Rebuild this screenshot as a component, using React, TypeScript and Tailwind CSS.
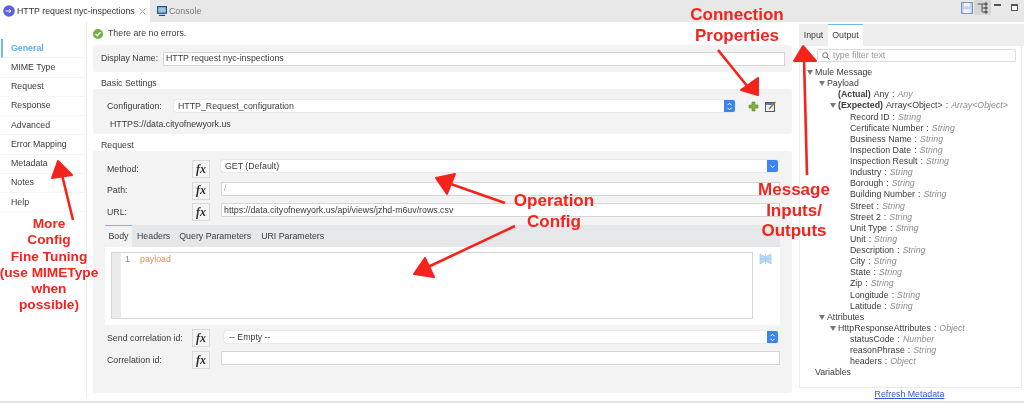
import type { ReactNode } from "react";

const navItems = ["General", "MIME Type", "Request", "Response", "Advanced", "Error Mapping", "Metadata", "Notes", "Help"];

type TreeRow = { depth: number; open?: boolean; name: string; bold?: string; type?: string };

const str = (name: string): TreeRow => ({ depth: 3, name, type: "String" });

const treeRows: TreeRow[] = [
  { depth: 0, open: true, name: "Mule Message" },
  { depth: 1, open: true, name: "Payload" },
  { depth: 2, bold: "(Actual)", name: "Any", type: "Any" },
  { depth: 2, open: true, bold: "(Expected)", name: "Array<Object>", type: "Array<Object>" },
  ...["Record ID", "Certificate Number", "Business Name", "Inspection Date", "Inspection Result", "Industry", "Borough", "Building Number", "Street", "Street 2", "Unit Type", "Unit", "Description", "City", "State", "Zip", "Longitude", "Latitude"].map(str),
  { depth: 1, open: true, name: "Attributes" },
  { depth: 2, open: true, name: "HttpResponseAttributes", type: "Object" },
  { depth: 3, name: "statusCode", type: "Number" },
  str("reasonPhrase"),
  { depth: 3, name: "headers", type: "Object" },
  { depth: 0, name: "Variables" },
];

const depthPad = ["pl-[15px]", "pl-[27px]", "pl-[38px]", "pl-[50px]"];

function Fx() {
  return (
    <div className="w-[18px] h-[18px] shrink-0 flex items-center justify-center bg-[#f5f5f5] border border-[#d9d9d9] text-[12px] italic font-bold text-[#333] font-['Liberation_Serif',serif]">
      fx
    </div>
  );
}

function Row({ label, children, className = "" }: { label: string; children: ReactNode; className?: string }) {
  return (
    <div className={`flex items-center h-[18px] ${className}`}>
      <span className="w-[99px] pl-[14px] shrink-0 whitespace-nowrap">{label}</span>
      <Fx />
      {children}
    </div>
  );
}

function Input({ value, className = "" }: { value: string; className?: string }) {
  return (
    <div className={`h-[14px] bg-white border border-[#d6d6d6] flex items-center px-[2px] ${className}`}>
      {value}
    </div>
  );
}

function SelectBox({ value, single, className = "" }: { value: string; single?: boolean; className?: string }) {
  return (
    <div className={`h-[12px] bg-white rounded-[2px] shadow-[0_0_1px_#999] flex items-center justify-between pl-[4px] ${className}`}>
      <span>{value}</span>
      <span className="w-[11px] h-[12px] rounded-r-[2px] bg-[#3b86ee] flex items-center justify-center">
        <svg width="7" height="9" viewBox="0 0 7 9" fill="none" stroke="white" strokeWidth="1">
          {single ? <path d="M1.5 3.5 3.5 5.5 5.5 3.5" /> : <path d="M1.5 3.2 3.5 1.2 5.5 3.2M1.5 5.8 3.5 7.8 5.5 5.8" />}
        </svg>
      </span>
    </div>
  );
}

function Arrows() {
  return (
    <svg className="absolute inset-0 pointer-events-none" width="1024" height="403" fill="#f5231c" stroke="#f5231c" strokeLinejoin="round">
      <path d="M62 175 73 220" strokeWidth="2.6" fill="none" />
      <path d="M58 161 52 178 72 175Z" strokeWidth="2" />
      <path d="M718 50 748 87" strokeWidth="2.6" fill="none" />
      <path d="M758 78 741 90 758 95Z" strokeWidth="2" />
      <path d="M804 58 807 175" strokeWidth="2.6" fill="none" />
      <path d="M803 46 794 61 816 61Z" strokeWidth="2" />
      <path d="M505 203 448 183" strokeWidth="2.6" fill="none" />
      <path d="M455 174 436 178 447 194Z" strokeWidth="2" />
      <path d="M515 226 428 267" strokeWidth="2.6" fill="none" />
      <path d="M425 258 414 274 434 277Z" strokeWidth="2" />
    </svg>
  );
}

function Note({ lines, className }: { lines: string[]; className: string }) {
  return (
    <div className={`absolute text-center font-bold text-[#f5231c] ${className}`}>
      {lines.map((l) => (
        <div key={l}>{l}</div>
      ))}
    </div>
  );
}

export default function App() {
  return (
    <div className="relative w-[1024px] h-[403px] overflow-hidden bg-white text-[#3a3a3a] text-[8.8px] leading-[11px] font-['Liberation_Sans',Arial,sans-serif] blur-[0.3px]">
      {/* top tab strip */}
      <div className="h-[22px] bg-[#e8e8e9] flex items-center">
        <div className="w-[150px] h-[22px] bg-white flex items-center pl-[3px] whitespace-nowrap">
          <svg width="12" height="12" viewBox="0 0 12 12" className="shrink-0">
            <circle cx="6" cy="6" r="5.8" fill="#5b62e0" />
            <path d="M2.5 6H8M6 4 8 6 6 8" stroke="white" strokeWidth="1" fill="none" />
          </svg>
          <span className="ml-[2px] text-[#333]">HTTP request nyc-inspections</span>
          <svg width="7" height="7" viewBox="0 0 7 7" className="ml-[4px]" stroke="#aaa" strokeWidth="1">
            <path d="M0.5 0.5 6.5 6.5M6.5 0.5 0.5 6.5" />
          </svg>
        </div>
        <svg width="10" height="10" viewBox="0 0 10 10" className="ml-[7px]">
          <rect x="0.6" y="0.6" width="8.8" height="6.6" fill="#9cc4e8" stroke="#1f4f85" strokeWidth="1.2" />
          <path d="M2 9.4H8" stroke="#1f4f85" strokeWidth="1.2" />
        </svg>
        <span className="ml-[2px] text-[#777]">Console</span>
        <div className="ml-auto self-start flex items-start pr-[6px]">
          <svg width="12" height="12" viewBox="0 0 12 12" className="mt-[2px]">
            <rect x="0.5" y="0.5" width="11" height="11" fill="#bcd0ea" stroke="#7d97bc" />
            <rect x="3" y="1" width="6" height="3.5" fill="#eef3fa" />
            <rect x="2.5" y="7" width="7" height="4" fill="#eef3fa" />
          </svg>
          <div className="ml-[1px] w-[17px] h-[15px] bg-[#d6d6d6] flex items-center justify-center">
            <svg width="11" height="12" viewBox="0 0 11 12" fill="none" stroke="#555" strokeWidth="1">
              <path d="M0.5 2H10M5 2V10H9M5 6H9" />
              <path d="M8 1H10V3H8ZM8 5H10V7H8ZM8 9H10V11H8Z" fill="#4d8a5f" />
            </svg>
          </div>
          <div className="ml-[3px] mt-[4px] w-[7px] h-[2px] border border-[#555] bg-white" />
          <div className="ml-[10px] mt-[4px] w-[7px] h-[7px] border border-[#555] border-t-2 bg-white" />
        </div>
      </div>

      <div className="flex h-[379px]">
        {/* section nav */}
        <div className="w-[87px] shrink-0 h-[377px] border-r border-[#ececec] pt-[17px] pl-[1px]">
          {navItems.map((item, i) => (
            <div key={item} className={i === 0 ? "h-[19.25px] flex items-center pl-[8px] border-l-2 border-l-[#6fbbe8] border-b border-[#f4f4f4] text-[#5bb0e3] font-bold" : "h-[19.25px] flex items-center pl-[10px] border-b border-[#f4f4f4]"}>
              {item}
            </div>
          ))}
        </div>

        {/* editor */}
        <div className="w-[705px] shrink-0 pl-[6px]">
          <div className="h-[23px] flex items-center">
            <span className="w-[10px] h-[10px] rounded-full bg-[#6db33f] flex items-center justify-center">
              <svg width="8" height="8" viewBox="0 0 8 8" fill="none" stroke="white" strokeWidth="1.4">
                <path d="M1.5 4 3.3 5.8 6.5 2.2" />
              </svg>
            </span>
            <span className="ml-[5px]">There are no errors.</span>
          </div>

          <div className="h-[27px] bg-[#f3f3f3] rounded-[3px] flex items-center pl-[8px] pr-[7px]">
            <span className="w-[62px]">Display Name:</span>
            <Input value="HTTP request nyc-inspections" className="flex-1" />
          </div>

          <div className="h-[17px] flex items-end pl-[8px]">Basic Settings</div>
          <div className="h-[45px] bg-[#f3f3f3] rounded-[3px] pl-[14px] pt-[11px]">
            <div className="flex items-center">
              <span className="w-[67px]">Configuration:</span>
              <SelectBox value="HTTP_Request_configuration" className="w-[561px]" />
              <svg width="11" height="11" viewBox="0 0 11 11" className="ml-[13px]">
                <path d="M4 1H7V4H10V7H7V10H4V7H1V4H4Z" fill="#7cb342" stroke="#5d8f2c" strokeWidth="0.6" />
              </svg>
              <svg width="12" height="11" viewBox="0 0 12 11" className="ml-[6px]" fill="none">
                <rect x="0.5" y="1.5" width="9" height="9" fill="#eef3f6" stroke="#556" />
                <rect x="1" y="2" width="8" height="2" fill="#4f7fc0" />
                <path d="M4 8 10.5 1" stroke="#a8742f" strokeWidth="1.4" />
              </svg>
            </div>
            <div className="pl-[3px] mt-[7px]">HTTPS://data.cityofnewyork.us</div>
          </div>

          <div className="h-[11px] mt-[6px] flex items-center pl-[8px]">Request</div>
          <div className="h-[242px] bg-[#f3f3f3] rounded-[3px] pt-[9px]">
            <Row label="Method:">
              <SelectBox value="GET (Default)" single className="ml-[11px] w-[557px] mb-[6px]" />
            </Row>
            <Row label="Path:" className="mt-[3.5px]">
              <Input value="/" className="ml-[11px] w-[559px] mb-[4px] text-[#aaa]" />
            </Row>
            <Row label="URL:" className="mt-[3.5px]">
              <Input value="https://data.cityofnewyork.us/api/views/jzhd-m6uv/rows.csv" className="ml-[11px] w-[559px] mb-[4px]" />
            </Row>

            <div className="ml-[12px] w-[675px] mt-[4px]">
              <div className="h-[22px] bg-[#e6e7e8] flex items-stretch">
                <div className="w-[27px] bg-[#f3f3f3] border-t border-[#6fbbe8] flex items-center justify-center">Body</div>
                <span className="ml-[5px] self-center">Headers</span>
                <span className="ml-[9px] self-center">Query Parameters</span>
                <span className="ml-[10px] self-center">URI Parameters</span>
              </div>
              <div className="h-[78px] bg-white pt-[5px] pl-[6px] flex items-start">
                <div className="w-[642px] h-[67px] border border-[#d6d6d6] flex">
                  <div className="w-[9px] bg-[#ececec] shrink-0" />
                  <span className="w-[9px] text-right text-[#888] pt-[1px]">1</span>
                  <span className="ml-[10px] pt-[1px] text-[#d9953c]">payload</span>
                </div>
                <svg width="13" height="12" viewBox="0 0 13 12" className="ml-[6px] mt-[1px]" fill="#bcdcf5" stroke="#8fc4ee" strokeWidth="0.6">
                  <path d="M1 1 6.5 4 12 1V11L6.5 8 1 11Z" />
                  <path d="M1 6H12M6.5 1V11" fill="none" />
                </svg>
              </div>
            </div>

            <Row label="Send correlation id:" className="mt-[4px]">
              <SelectBox value="-- Empty --" className="ml-[14px] w-[554px] pl-[5px] mb-[2px]" />
            </Row>
            <Row label="Correlation id:" className="mt-[4px]">
              <Input value="" className="ml-[11px] w-[559px] mb-[4px]" />
            </Row>
          </div>
        </div>

        {/* metadata */}
        <div className="w-[225px] ml-[7px] shrink-0 mt-[2px]">
          <div className="h-[22px] bg-[#eeeeef] flex items-stretch">
            <div className="w-[29px] flex items-center justify-center">Input</div>
            <div className="w-[35px] bg-white border-t border-[#6fbbe8] flex items-center justify-center">Output</div>
          </div>
          <div className="h-[342px] mr-[2px] pt-[3px] border border-t-0 border-[#ececec]">
            <div className="h-[13px] ml-[17px] mr-[5px] border border-[#ddd] rounded-[2px] flex items-center pl-[4px] text-[#999]">
              <svg width="8" height="8" viewBox="0 0 8 8" fill="none" stroke="#777" strokeWidth="1">
                <circle cx="3.2" cy="3.2" r="2.5" />
                <path d="M5 5 7.5 7.5" />
              </svg>
              <span className="ml-[3px]">type filter text</span>
            </div>
            <div className="mt-[5px]">
              {treeRows.map((row) => (
                <div key={row.name} className={`h-[11.125px] flex items-center whitespace-nowrap ${depthPad[row.depth]}`}>
                  {row.open && <span className="w-0 h-0 -ml-[8px] mr-[2px] border-x-[3px] border-x-transparent border-t-[5px] border-t-[#777]" />}
                  {row.bold && <span className="font-bold mr-[3px]">{row.bold}</span>}
                  <span>{row.name}</span>
                  {row.type && <span className="ml-[3px]">:</span>}
                  {row.type && <span className="ml-[3px] italic text-[#8d8d8d]">{row.type}</span>}
                </div>
              ))}
            </div>
          </div>
          <div className="h-[12px] flex items-center justify-center pr-[4px] text-[#3a55d0] underline">Refresh Metadata</div>
        </div>
      </div>
      <div className="h-[2px] bg-[#e6e6e6]" />

      <Arrows />
      <Note lines={["Connection", "Properties"]} className="left-[677px] w-[120px] top-[5px] text-[17px] leading-[20.5px]" />
      <Note lines={["Operation", "Config"]} className="left-[494px] w-[120px] top-[191px] text-[17px] leading-[20.5px]" />
      <Note lines={["Message", "Inputs/", "Outputs"]} className="left-[734px] w-[120px] top-[180px] text-[17px] leading-[20.5px]" />
      <Note lines={["More", "Config", "Fine Tuning", "(use MIMEType", "when", "possible)"]} className="left-[-1px] w-[100px] top-[216px] text-[13.7px] leading-[16.3px]" />
    </div>
  );
}
